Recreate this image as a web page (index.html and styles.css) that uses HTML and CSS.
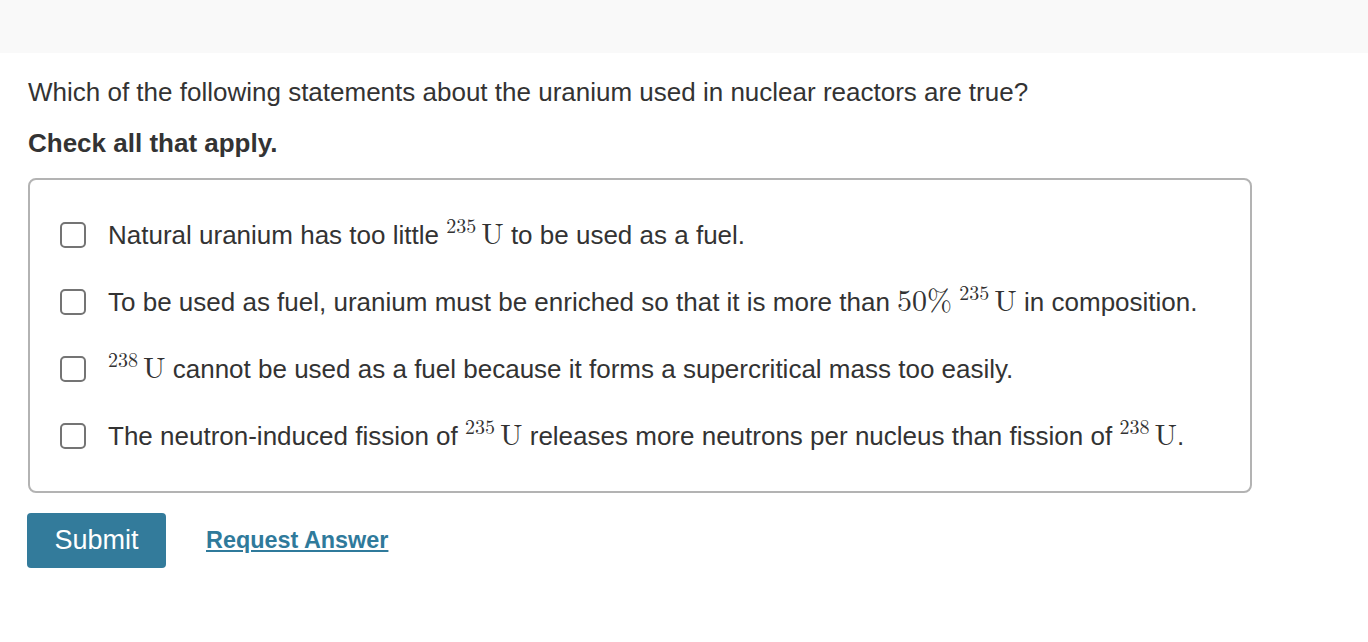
FILE: index.html
```html
<!DOCTYPE html>
<html>
<head>
<meta charset="utf-8">
<link rel="stylesheet" href="styles.css">
</head>
<body>
<div class="topbar"></div>
<main class="content">
  <p class="question">Which of the following statements about the uranium used in nuclear reactors are true?</p>
  <p class="instruction">Check all that apply.</p>
  <div class="options">
    <label class="option"><span class="box"></span><span class="text">Natural uranium has too little <span class="math"><sup>235</sup>U</span> to be used as a fuel.</span></label>
    <label class="option"><span class="box"></span><span class="text">To be used as fuel, uranium must be enriched so that it is more than <span class="math">50%</span> <span class="math"><sup>235</sup>U</span> in composition.</span></label>
    <label class="option"><span class="box"></span><span class="text"><span class="math"><sup>238</sup>U</span> cannot be used as a fuel because it forms a supercritical mass too easily.</span></label>
    <label class="option"><span class="box"></span><span class="text">The neutron-induced fission of <span class="math"><sup>235</sup>U</span> releases more neutrons per nucleus than fission of <span class="math"><sup>238</sup>U</span>.</span></label>
  </div>
  <div class="actions">
    <button class="submit">Submit</button>
    <a class="request" href="#">Request Answer</a>
  </div>
</main>
</body>
</html>
```
FILE: styles.css
```css
html, body {
  margin: 0;
  padding: 0;
  background: #ffffff;
  font-family: "Liberation Sans", Arial, sans-serif;
  color: #333333;
}
.topbar {
  height: 53px;
  background: #f9f9f9;
}
.content {
  padding: 0 27px 0 28px;
}
.question {
  margin: 24px 0 0;
  font-size: 26px;
  line-height: 30px;
}
.instruction {
  margin: 21px 0 0;
  font-size: 26px;
  line-height: 30px;
  font-weight: bold;
}
.options {
  margin-top: 20px;
  width: 1224px;
  border: 2px solid #b3b3b3;
  border-radius: 8px;
  padding: 41px 0 39px 30px;
  display: flex;
  flex-direction: column;
  gap: 37px;
  box-sizing: border-box;
}
.option {
  display: flex;
  align-items: center;
  gap: 22px;
  font-size: 26px;
  line-height: 30px;
  height: 30px;
}
.box {
  width: 22px;
  height: 22px;
  border: 2px solid #747474;
  border-radius: 5px;
  flex: none;
  position: relative;
  top: -1px;
}
.math {
  font-family: "Latin Modern Math", "Liberation Serif", "DejaVu Serif", serif;
  font-size: 30px;
}
.math sup {
  font-size: 20px;
  vertical-align: 0;
  position: relative;
  top: -11px;
  margin-right: 5px;
}
.actions {
  margin-top: 20px;
  display: flex;
  align-items: center;
  gap: 40px;
}
.submit {
  width: 139px;
  height: 55px;
  background: #337b9b;
  color: #ffffff;
  border: none;
  border-radius: 4px;
  font-family: "Liberation Sans", Arial, sans-serif;
  font-size: 27px;
  padding: 0;
  margin-left: -1px;
}
.request {
  color: #2f7a9b;
  font-weight: bold;
  font-size: 23.4px;
  text-decoration: underline;
}
```
